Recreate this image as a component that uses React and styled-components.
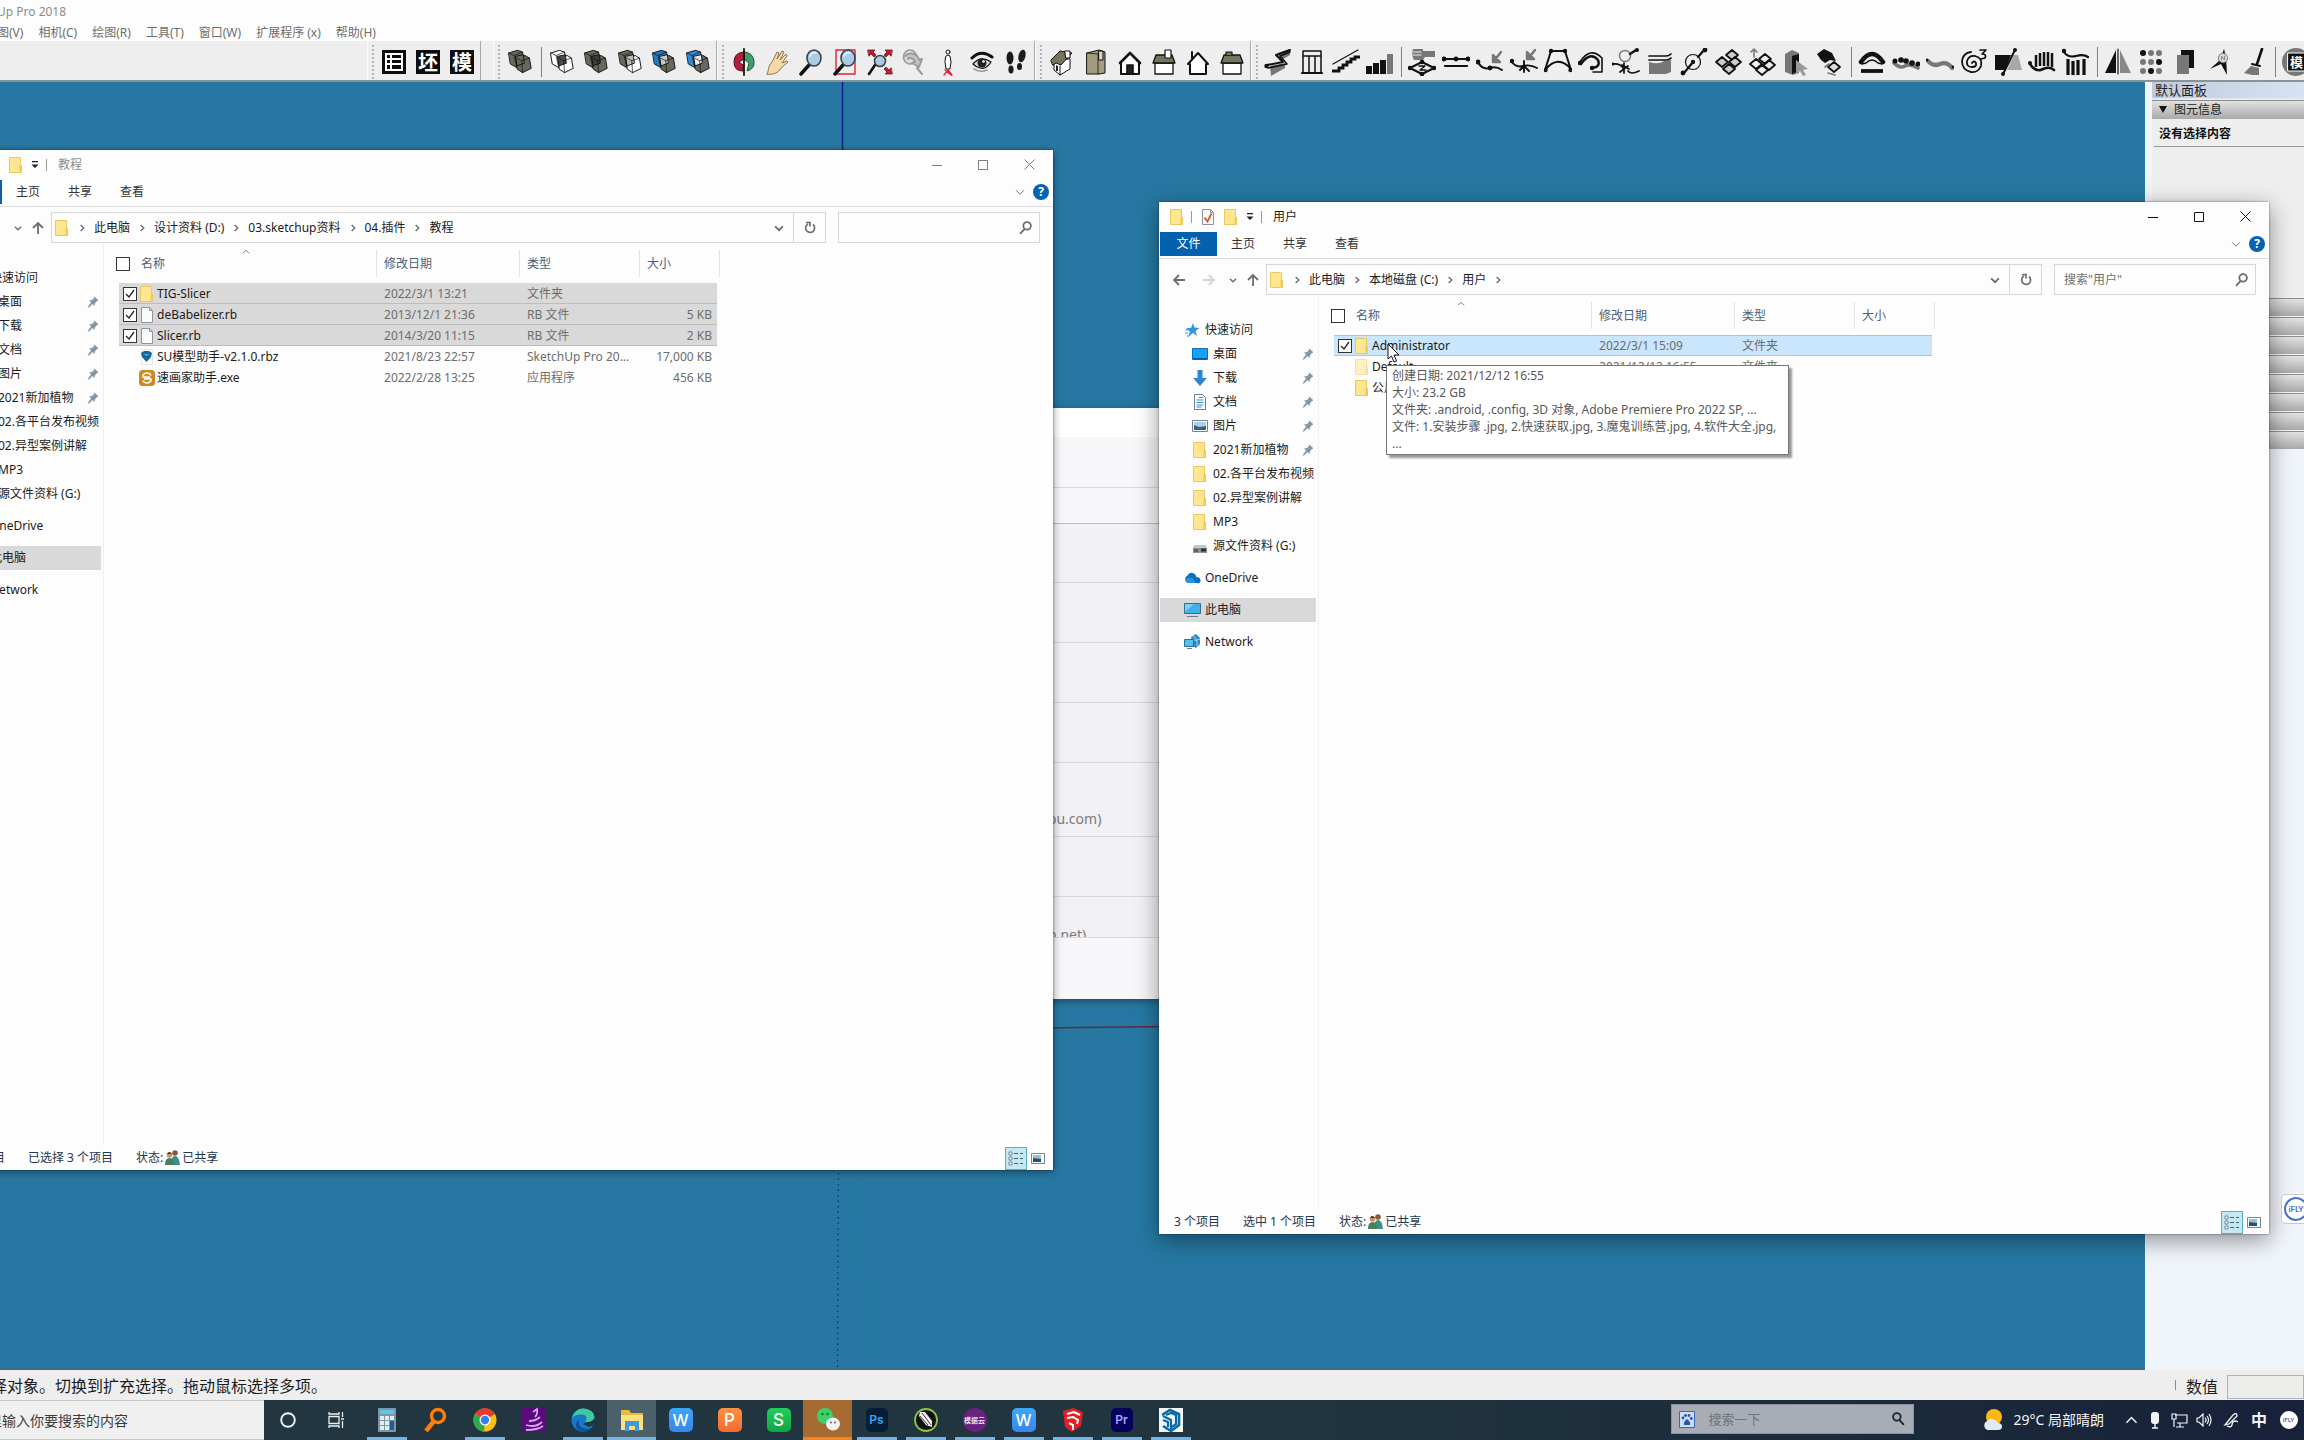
import React from "react";
import styled, { createGlobalStyle, css } from "styled-components";

const Global = createGlobalStyle`
  * { box-sizing: border-box; }
  html, body { margin: 0; padding: 0; overflow: hidden; }
  body, button, input, table {
    font-family: "Noto Sans", "Noto Sans CJK SC", sans-serif;
    font-size: 12px;
    line-height: 16px;
  }
  button { border: 0; padding: 0; margin: 0; background: transparent; color: inherit; white-space: nowrap; }
  ul { list-style: none; margin: 0; padding: 0; }
  svg { display: block; flex: none; }
`;

/* ---------- shell ---------- */
const Desktop = styled.div`
  position: relative;
  display: flex;
  flex-direction: column;
  height: 100vh;
  overflow: hidden;
  background: #fdfdfd;
`;
const TitleText = styled.div`
  height: 24px;
  margin-left: -3px;
  line-height: 24px;
  color: #8c8c8c;
  white-space: nowrap;
`;
const MenuBar = styled.nav`
  display: flex;
  gap: 15px;
  height: 17px;
  margin-left: -15px;
  color: #6e6e6e;
`;
const ToolBar = styled.div`
  display: flex;
  height: 41px;
  padding-left: 367px;
  background: #eeeeee;
  border-bottom: 2px solid #8a9298;
  overflow: hidden;
`;
const ToolGroup = styled.div`
  display: flex;
  flex: none;
  align-items: center;
  padding: 2px 1px 0 4px;
  margin-right: ${(p) => (p.$gap ? "12px" : "0")};
  border-left: 1px solid #fafafa;
  border-right: 1px solid #a9a9a9;
`;
const Grip = styled.span`
  width: 2px;
  height: 34px;
  margin-right: 3px;
  background: repeating-linear-gradient(#b5b5b5 0 2px, transparent 2px 4px);
`;
const ToolSep = styled.span`
  width: 8px;
  height: 30px;
  background: linear-gradient(#7d7d7d, #7d7d7d) center / 1px 100% no-repeat;
`;
const ToolButton = styled.button`
  display: flex;
  align-items: center;
  justify-content: center;
  width: 34px;
  height: 34px;
`;
const CharTile = styled.span`
  width: 24px;
  height: 24px;
  background: #0c0c0c;
  color: #fff;
  font: bold 20px/23px "Noto Sans CJK SC", sans-serif;
  text-align: center;
`;
const Workspace = styled.div`
  display: flex;
  flex: 1;
  min-height: 0;
`;
const Canvas = styled.div`
  position: relative;
  flex: 1;
  background: #2678a2;
  border-bottom: 2px solid #3f6d88;
`;
const AxisLines = styled.svg`
  width: 100%;
  height: 100%;
`;

/* ---------- side panel ---------- */
const Tray = styled.aside`
  display: flex;
  flex-direction: column;
  width: 159px;
  padding-left: 6px;
  background: #f0f4fb;
  border-left: 1px solid #fafafa;
`;
const TrayTitle = styled.h2`
  margin: 0;
  height: 18px;
  padding-left: 3px;
  font-size: 13px;
  font-weight: 400;
  line-height: 16px;
  color: #222;
  background: linear-gradient(90deg, #bfcbdb, #d7e3f2);
  border-bottom: 2px solid #e6eaf0;
`;
const TrayHead = styled.button`
  display: flex;
  align-items: center;
  gap: 7px;
  height: ${(p) => (p.$slim ? "18px" : "19px")};
  margin-bottom: ${(p) => (p.$slim ? "1px" : "0")};
  padding-left: 7px;
  color: #222;
  background: linear-gradient(#e2e2e2, #a9a9a9);
  border-top: 1px solid #8e8e8e;
`;
const TrayBody = styled.div`
  height: 179px;
  padding: 7px 0 0 2px;
  background: #eeeeee;
  font-weight: 700;
  color: #111;
`;
const TrayNote = styled.div`
  padding-left: 5px;
`;
const TrayRule = styled.div`
  height: 1px;
  margin-top: 4px;
  background: #9a9a9a;
`;
const TrayStack = styled.div`
  display: flex;
  flex-direction: column;
  background: #f4f4f4;
`;

/* ---------- app status ---------- */
const AppStatus = styled.footer`
  display: flex;
  align-items: center;
  height: 30px;
  background: #eeeeee;
  font-size: 16px;
  color: #1c1c1c;
`;
const StatusHint = styled.span`
  flex: 1;
  margin-left: -9px;
  padding-top: 2px;
  white-space: nowrap;
`;
const ValueLabel = styled.label`
  display: flex;
  align-items: center;
  gap: 9px;
  padding: 4px 0 0 10px;
`;
const ValueTick = styled.span`
  width: 1px;
  height: 10px;
  background: #8a8a8a;
`;
const ValueInput = styled.input`
  width: 77px;
  height: 24px;
  border: 1px solid #a8b3c0;
  background: #ececea;
`;

/* ---------- taskbar ---------- */
const TaskBar = styled.div`
  display: flex;
  align-items: stretch;
  height: 40px;
  background: linear-gradient(90deg, #21363f, #20353f 55%, #1b2b3b 80%, #18213a);
`;
const TaskSearch = styled.input`
  width: 264px;
  border: 0;
  border-top: 1px solid #c8c8c8;
  border-bottom: 1px solid #c8c8c8;
  padding: 1px 0 0;
  background: #f0f0f0;
  font-size: 14px;
  text-indent: -40px;
  &::placeholder { color: #3c3c3c; opacity: 1; }
`;
const SysButton = styled.button`
  display: flex;
  align-items: center;
  justify-content: center;
  width: 48px;
`;
const AppList = styled.div`
  display: flex;
  flex: 1;
  padding-left: 2px;
`;
const barColor = { open: "#76b3e2", active: "#76b3e2", alert: "#f5821f" };
const TaskButton = styled.button`
  display: flex;
  align-items: center;
  justify-content: center;
  width: 49px;
  background:
    linear-gradient(${(p) => barColor[p.$state] || "transparent"} 0 0) center bottom /
      ${(p) => (p.$state === "open" ? "40px" : "100%")} 3px no-repeat,
    ${(p) => (p.$state === "active" ? "#4a616c" : p.$state === "alert" ? "#a66a33" : "transparent")};
`;
const LogoTile = styled.span`
  display: flex;
  align-items: center;
  justify-content: center;
  width: ${(p) => p.$w || 24}px;
  height: 24px;
  border-radius: ${(p) => (p.$round ? "50%" : "5px")};
  background: ${(p) => p.$bg};
  color: ${(p) => p.$fg || "#fff"};
  font: ${(p) => p.$weight || 500} ${(p) => p.$size || 17}px/24px ${(p) => (p.$cjk ? '"Noto Sans CJK SC"' : "Inter")}, sans-serif;
`;
const DeskSearch = styled.label`
  display: flex;
  align-items: center;
  gap: 14px;
  width: 243px;
  height: 30px;
  margin: 4px 68px 0 0;
  padding: 0 8px 0 7px;
  background: #a8adb5;
  border: 1px solid #8d939c;
`;
const DeskInput = styled.input`
  flex: 1;
  min-width: 0;
  border: 0;
  padding: 0;
  background: transparent;
  font-size: 13px;
  &::placeholder { color: #6d737b; opacity: 1; }
`;
const Weather = styled.button`
  display: flex;
  align-items: center;
  gap: 10px;
  margin-right: 15px;
  font-size: 14px;
  color: #f2f4f7;
`;
const TrayIcons = styled.div`
  display: flex;
  align-items: center;
  color: #f2f4f7;
`;
const TrayButton = styled.button`
  display: flex;
  align-items: center;
  justify-content: center;
  width: ${(p) => p.$w || 24}px;
  height: 40px;
  font-size: 16px;
  font-weight: 700;
`;
const FlyBadge = styled.span`
  display: flex;
  align-items: center;
  justify-content: center;
  width: ${(p) => p.$s}px;
  height: ${(p) => p.$s}px;
  border-radius: 50%;
  border: 2px solid ${(p) => p.$c};
  background: #fff;
  color: #3f6cc0;
  font: bold ${(p) => p.$f}px/12px Lato, sans-serif;
`;
const FloatBall = styled.button`
  position: absolute;
  right: -7px;
  top: 1194px;
  padding: 2px;
  background: #fff;
  border: 1px solid #c5cad6;
  border-radius: 4px;
`;

/* ---------- explorer window ---------- */
const Frame = styled.section`
  position: absolute;
  display: flex;
  flex-direction: column;
  left: ${(p) => p.$x}px;
  top: ${(p) => p.$y}px;
  width: ${(p) => p.$w}px;
  height: ${(p) => p.$h}px;
  background: #fdfdfd;
  color: #1b1b1b;
  box-shadow: ${(p) =>
    p.$active ? "0 6px 22px rgba(0,0,0,.42), 0 0 2px rgba(0,0,0,.5)" : "0 2px 9px rgba(0,0,0,.4), 0 0 2px rgba(0,0,0,.5)"};
`;
const TitleBar = styled.header`
  display: flex;
  align-items: center;
  height: 29px;
  padding: 0 1px 0 10px;
  color: ${(p) => (p.$active ? "#1b1b1b" : "#8e8e8e")};
`;
const QuickTools = styled.div`
  display: flex;
  align-items: center;
  flex: 1;
`;
const QuickButton = styled.button`
  display: flex;
  justify-content: center;
  width: ${(p) => p.$w}px;
`;
const TitleRule = styled.span`
  width: 1px;
  height: 12px;
  margin: 0 ${(p) => p.$side || 0}px;
  background: #9a9a9a;
`;
const WindowName = styled.span`
  padding-left: 7px;
`;
const FrameButton = styled.button`
  display: flex;
  align-items: center;
  justify-content: center;
  width: 46px;
  height: 28px;
  color: ${(p) => (p.$active ? "#111" : "#7c7c7c")};
`;
const TabRow = styled.div`
  display: flex;
  align-items: center;
  height: 28px;
  padding: 1px 4px 2px 1px;
  border-bottom: 1px solid #dcdcdc;
`;
const Tab = styled.button`
  width: 52px;
  height: 24px;
  color: #333;
  ${(p) => p.$file && css`
    width: 57px;
    color: #fff;
    background: #0461ae;
  `}
`;
const RibbonEnd = styled.div`
  display: flex;
  flex: 1;
  align-items: center;
  justify-content: flex-end;
  gap: 8px;
`;
const Help = styled.button`
  width: 16px;
  height: 16px;
  border-radius: 50%;
  background: #0862b0;
  color: #fff;
  font-size: 12px;
  font-weight: 700;
  line-height: 16px;
`;
const AddressRow = styled.div`
  display: flex;
  height: 36px;
  padding: 5px 13px 0 5px;
  color: #6e6e6e;
`;
const NavButton = styled.button`
  display: flex;
  align-items: center;
  justify-content: center;
  width: ${(p) => p.$w}px;
  color: ${(p) => (p.$dim ? "#d4d4d4" : "#6e6e6e")};
`;
const AddressBox = styled.div`
  display: flex;
  align-items: center;
  flex: 1;
  margin: 0 12px 0 1px;
  padding-left: 2px;
  border: 1px solid #d6d6d6;
`;
const Crumb = styled.button`
  color: #1b1b1b;
`;
const CrumbArrow = styled.span`
  display: flex;
  justify-content: center;
  width: 24px;
`;
const Grow = styled.span`
  flex: 1;
`;
const Refresh = styled.button`
  display: flex;
  align-items: center;
  justify-content: center;
  width: 32px;
  height: 100%;
  border-left: 1px solid #d6d6d6;
`;
const SearchBox = styled.label`
  display: flex;
  align-items: center;
  width: 202px;
  padding: 0 7px 0 9px;
  border: 1px solid #d6d6d6;
`;
const SearchInput = styled.input`
  flex: 1;
  min-width: 0;
  padding: 0;
  border: 0;
  background: transparent;
  &::placeholder { color: #707070; opacity: 1; }
`;
const Body = styled.div`
  display: flex;
  flex: 1;
  min-height: 0;
`;
const Side = styled.ul`
  width: 160px;
  padding: 23px 2px 0 1px;
  border-right: 1px solid #f1f1f1;
`;
const SideItem = styled.li`
  display: flex;
  align-items: center;
  gap: ${(p) => (p.$top ? "4px" : "5px")};
  height: 24px;
  margin-top: ${(p) => (p.$apart ? "8px" : "0")};
  padding-left: ${(p) => (p.$top ? "24px" : "32px")};
  padding-right: 2px;
  background: ${(p) => (p.$on ? "#d9d9d9" : "transparent")};
  white-space: nowrap;
`;
const SideLink = styled.a`
  flex: 1;
  color: #1b1b1b;
  text-decoration: none;
`;
const Listing = styled.div`
  flex: 1;
  padding: 7px 0 0 12px;
`;
const Files = styled.table`
  table-layout: fixed;
  width: 604px;
  border-collapse: collapse;
  td, th { padding: 0; font-weight: 400; text-align: left; }
`;
const HeadCell = styled.div`
  position: relative;
  display: flex;
  align-items: center;
  gap: 11px;
  height: 27px;
  margin-bottom: 6px;
  padding-left: ${(p) => (p.$first ? "0" : "7px")};
  color: #4c607a;
  border-right: 1px solid #e2e2e2;
`;
const SortMark = styled.span`
  position: absolute;
  top: -2px;
  left: 126px;
`;
const Tick = styled.input`
  appearance: none;
  flex: none;
  width: 14px;
  height: 14px;
  margin: 0;
  border: 1px solid #333;
  background: #fff;
  visibility: ${(p) => (p.$hide ? "hidden" : "visible")};
  &:checked {
    background: #fff url("data:image/svg+xml,%3Csvg xmlns='http://www.w3.org/2000/svg' viewBox='0 0 12 12'%3E%3Cpath d='M2 6l3 3 5-7' fill='none' stroke='%23222' stroke-width='1.3'/%3E%3C/svg%3E");
  }
`;
const FileRow = styled.tr`
  height: 21px;
  color: #6d6d6d;
`;
const FileCell = styled.td`
  padding-left: 7px !important;
  overflow: hidden;
  white-space: nowrap;
  text-overflow: ellipsis;
  ${(p) => p.$name && css`padding-left: 4px !important; color: #1b1b1b;`}
  ${(p) => p.$size && css`padding-right: 5px !important; text-align: right !important; overflow: visible; direction: rtl;`}
  ${(p) => p.$mark === "grey" && css`background: #d9d9d9; box-shadow: inset 0 -1px #bcbcbc;`}
  ${(p) => p.$mark === "blue" && css`background: #cae6fd; box-shadow: inset 0 1px #9ccbee, inset 0 -1px #9ccbee;`}
`;
const SizeText = styled.span`
  direction: ltr;
  unicode-bidi: embed;
`;
const NameInner = styled.div`
  display: flex;
  align-items: center;
  gap: 2px;
  height: 21px;
`;
const FrameStatus = styled.footer`
  display: flex;
  align-items: center;
  gap: 23px;
  height: 24px;
  padding: 0 8px 0 15px;
  color: #24364c;
`;
const Shared = styled.span`
  display: flex;
  flex: 1;
  align-items: center;
  gap: 1px;
`;
const Views = styled.div`
  display: flex;
  align-items: center;
  gap: 3px;
`;
const ViewButton = styled.button`
  display: flex;
  align-items: center;
  justify-content: center;
  width: ${(p) => (p.$on ? "22px" : "15px")};
  height: 23px;
  background: ${(p) => (p.$on ? "#c5e8f2" : "transparent")};
  border: ${(p) => (p.$on ? "1px solid #59adc4" : "0")};
`;

/* ---------- tooltip, pointer, dialog behind ---------- */
const Tip = styled.div`
  position: absolute;
  left: 1386px;
  top: 365px;
  padding: 1px 12px 2px 5px;
  border: 1px solid #767676;
  background: #fff;
  box-shadow: 3px 3px 2px rgba(0, 0, 0, 0.4);
  color: #575757;
  line-height: 17px;
  white-space: nowrap;
`;
const Pointer = styled.svg`
  position: absolute;
  left: 1387px;
  top: 343px;
`;
const Dialog = styled.section`
  position: absolute;
  display: flex;
  flex-direction: column;
  left: 900px;
  top: 408px;
  width: 400px;
  height: 591px;
  background: #f7f7fa;
  box-shadow: 0 2px 8px rgba(0, 0, 0, 0.4);
  color: #7a7a7a;
  font-size: 14px;
`;
const DialogRow = styled.div`
  display: flex;
  align-items: flex-end;
  flex: none;
  height: ${(p) => p.$h}px;
  padding: 0 0 ${(p) => p.$pad || 0}px 148px;
  background: ${(p) => p.$bg || "#f2f1f6"};
  border-bottom: 1px solid ${(p) => p.$line || "#d8d8dc"};
  overflow: hidden;
`;
const DialogText = styled.span`
  flex: none;
  margin-bottom: ${(p) => (p.$cut ? "-6px" : "0")};
`;

/* ---------- drawings ---------- */
const Tool = ({ children, w = 28, h = 28 }) => (
  <svg width={w} height={h} viewBox="0 0 28 28" fill="none" stroke="#111" strokeWidth="1.6" strokeLinecap="round" strokeLinejoin="round">{children}</svg>
);
const G = "#777";
const solid = (a, b, c) => (
  <Tool w={24} h={25}>
    <g strokeWidth="1.1">
      <path d="M1 4l10-3 6 2 2 14-9 4-7-4z" fill={a} />
      <path d="M10 10l10-3 5 3 2 12-10 5-6-4z" fill={b} />
      <path d="M9 8l9-2 1 10-8 3z" fill={c} />
      <path d="M1 4l6 3 10-4M7 7l3 13M10 10l6 3 9-3M16 13l1 14" strokeWidth=".8" />
    </g>
  </Tool>
);
const brown = "#69685c";
const diamond = (x, y, f) => <path key={x + "-" + y} d={`M${x} ${y - 5}l6 5-6 5-6-5z`} fill={f} strokeWidth="1.8" />;
const dot = (x, y, r = 2, f = "#111") => <circle key={x + "," + y} cx={x} cy={y} r={r} fill={f} stroke="none" />;
const lens = (
  <g><path d="M11 17L3 26" strokeWidth="3.4" /><ellipse cx="16" cy="10" rx="7" ry="8" fill="#a9cbe6" stroke="#39424c" strokeWidth="1.6" /><path d="M12 8q2-4 6-3" stroke="#e8f3fb" /></g>
);
const roofA = "#77745e";

const toolGroups = [
  { gap: true, items: ["frame", "坯", "模"] },
  { items: [
    solid(brown, brown, brown), "|",
    solid("#fff", "#fff", "#4d4c44"), solid(brown, brown, "#3c3b35"), solid(brown, "#fff", "#b9b9b6"),
    solid("#1f78c8", brown, "#c9c9c4"), solid("#2f8bdc", brown, "#eee"),
  ] },
  { items: [
    <Tool><path d="M13 4q-9 1-9 10t9 9v-6l-4-3 5-3z" fill="#b3203c" stroke="#5d1120" strokeWidth="1" /><path d="M15 4q8 1 9 9t-7 10l2-8-5-4z" fill="#3f9d6b" stroke="#215a3b" strokeWidth="1" /><path d="M14 1v26" strokeWidth="1.8" /></Tool>,
    <Tool><path d="M3 26c2-4 1-8 5-12l5-10 2 1-2 6 5-8 2 1-4 8 6-6 1 2-5 7 5-2 1 1-7 6c-2 4-5 5-8 6z" fill="#f5d9a8" stroke="#8b744d" strokeWidth="1" /></Tool>,
    <Tool>{lens}</Tool>,
    <Tool><path d="M4 2h19v24H4z" stroke="#dc2438" strokeWidth="1.4" />{lens}</Tool>,
    <Tool><path d="M9 17l-6 9" strokeWidth="2.6" /><circle cx="14" cy="13" r="5.500" fill="#a9cbe6" stroke="#39424c" /><g fill="#b4202e" stroke="#7c1520" strokeWidth=".8"><path d="M2 2h7l-2 2 3 3-2 2-3-3-2 2z" /><path d="M26 2h-7l2 2-3 3 2 2 3-3 2 2z" /><path d="M26 26h-7l2-2-3-3 2-2 3 3 2-2z" /></g></Tool>,
    <Tool><ellipse cx="10" cy="9" rx="6.500" ry="7" fill="#dcdcdc" stroke="#9a9a9a" /><path d="M5 8c5-5 13-2 14 4l3-1-3 8-7-4 3-1c-1-4-5-5-7-3M17 20l5 6" stroke="#9a9a9a" fill="#c4c4c4" strokeWidth="2" /></Tool>,
    <Tool><circle cx="14" cy="4" r="2" strokeWidth="1" fill="#fff" /><path d="M12 8q2-2 4 0l1 6-1 7h-4l-1-7z" strokeWidth="1" fill="#fff" /><path d="M10 27l4-5 4 5M11 22l6 5" stroke="#dc2438" strokeWidth="1.300" /></Tool>,
    <Tool><path d="M4 10q9-9 20-1" strokeWidth="3" /><path d="M5 16q8-9 18-2-5 8-11 6-4-1-7-4z" fill="#ddd" strokeWidth="1.200" /><circle cx="14" cy="15" r="4.500" fill="#222" stroke="none" /><circle cx="15.500" cy="13.500" r="1.300" fill="#fff" stroke="none" /><path d="M6 21q7 4 13 1" stroke="#999" /></Tool>,
    <Tool><g fill="#1b1b1b" stroke="none"><ellipse cx="8" cy="10" rx="3.500" ry="6.500" /><ellipse cx="9" cy="21.500" rx="2.600" ry="4" /><ellipse cx="20" cy="8" rx="3.500" ry="6.500" transform="rotate(14 20 8)" /><ellipse cx="17.500" cy="18.500" rx="2.500" ry="3.600" /></g></Tool>,
  ] },
  { items: [
    <Tool><path d="M6 14v8l6 5 10-6V11z" fill="#fff" strokeWidth="1" /><path d="M12 27v-9" strokeWidth="1" /><path d="M3 12l9-9 12 2-11 12-5-2-3 2z" fill={roofA} strokeWidth="1" /><path d="M17 3h5v7h-4z" fill="#fff" strokeWidth="1" /><path d="M8 17v6h2v-5z" fill="#222" stroke="none" /></Tool>,
    <Tool><path d="M5 5l12-3 6 2v21l-6 1H5z" fill="#a39d80" strokeWidth="1" /><path d="M16 6v20M16 6L5 5" strokeWidth=".8" /><path d="M17 3h4v9h-4z" fill="#d8d5c6" strokeWidth="1" /></Tool>,
    <Tool><path d="M5 15v11h18V15" fill="#fff" strokeWidth="2" /><path d="M4 15L14 5l10 10" strokeWidth="2.600" fill="#fff" /><path d="M11 26v-9h6v9z" fill="#222" /></Tool>,
    <Tool><path d="M5 15h18v11H5z" fill="#fff" strokeWidth="1.300" /><path d="M3 15l3-8h16l3 8z" fill={roofA} strokeWidth="1.300" /><path d="M15 2h6v8h-6z" fill="#fff" strokeWidth="1.200" /></Tool>,
    <Tool><path d="M8 10V4" strokeWidth="2" /><path d="M4 16L14 5l10 11h-2v10H6V16z" fill="#fff" strokeWidth="2" /></Tool>,
    <Tool><path d="M5 15h18v11H5z" fill="#fff" strokeWidth="1.300" /><path d="M3 15l3-8h16l3 8z" fill={roofA} strokeWidth="1.300" /><path d="M8 7V4h6v3" fill={roofA} strokeWidth="1.200" /></Tool>,
  ] },
  { items: [
    <Tool><path d="M6 18l15-3v5L7 28zM14 5l12-4v6l-10 6z" fill={G} stroke="none" /><path d="M3 17l16-3-7-7 14-5" strokeWidth="2" /><path d="M4 20l19-4-7-8 10-4" strokeWidth="1.600" />{dot(2.500, 18, 2.200)}</Tool>,
    <Tool><path d="M5 3h18v22H5zM5 8h18M11 8v17M17 8v17" strokeWidth="1.500" strokeLinecap="butt" /><path d="M4 25h20" strokeWidth="2" /></Tool>,
    <Tool><path d="M1 16L26 2" strokeWidth="1.200" /><path d="M0 23h7v-3h4v-3h4v-3h4v-3h4V9h5" strokeWidth="2.800" strokeLinejoin="miter" strokeLinecap="butt" /></Tool>,
    <Tool><g stroke="none" fill="#111"><path d="M0 18h6v8H0zM7 15h6v11H7zM14 12h6v14h-6z" /><path d="M21 6h6v20h-6z" fill={G} /></g></Tool>, "|",
    <Tool><path d="M5 1h10v2h12v6H17l-2 3H6q-3-5-1-11z" fill={G} stroke="none" /><path d="M5 4h8M5 7h8" stroke="#eee" strokeWidth="1" /><path d="M2 20l12-6 12 6-12 6z" strokeWidth="2" />{[[2, 20], [26, 20], [14, 14], [14, 26]].map(([x, y]) => dot(x, y, 2.300))}<path d="M11 18h6l-5 4h6" strokeWidth="1.300" /></Tool>,
    <Tool><path d="M1 11h26M3 18h22" strokeWidth="2.200" />{dot(2, 11, 2.400)}{dot(14, 11, 2.400)}{dot(26, 11, 2.400)}</Tool>,
    <Tool><path d="M25 4l-7 9M17 7v7h7z" stroke={G} fill={G} strokeWidth="2.400" /><path d="M2 14q4 8 12 6 6-2 12 2" strokeWidth="2" />{dot(2, 14, 2.400)}{dot(14, 20, 2.400)}</Tool>,
    <Tool><path d="M25 2l-7 9M17 4v7h7z" stroke={G} fill={G} strokeWidth="2.400" /><path d="M1 13q5 7 12 5 7-2 14 2M14 13v11M10 22l4-4 5 5" strokeWidth="1.900" />{dot(2, 13, 2.200)}</Tool>,
    <Tool><path d="M7 3h14l6 19M7 3L1 22Q14 6 27 21" strokeWidth="2" />{[[7, 3], [21, 3], [1.500, 22], [26.500, 22]].map(([x, y]) => dot(x, y, 2.200))}</Tool>,
    <Tool><path d="M2 14Q12-2 24 10v14h-9" strokeWidth="1.600" /><path d="M3 16Q12 3 20 12q3 7-6 8" strokeWidth="2.400" />{dot(2, 15, 2.200)}{dot(14, 20, 2.200)}</Tool>,
    <Tool><circle cx="13" cy="8" r="5.500" stroke={G} strokeWidth="1.400" /><path d="M18 6l6-4" strokeWidth="2.400" /><path d="M1 16q7-1 10 4M16 23q3 4 11 0M12 15v10M8 24l8-6M10 17l7 4" strokeWidth="1.700" />{dot(25, 2, 2)}{dot(1, 16, 1.600)}</Tool>,
    <Tool><path d="M3 14q10 3 15-1l7-1v12l-5 2H3z" fill={G} stroke="none" /><path d="M3 8h17q3 0 5-2M3 12h17q3 0 5-2" strokeWidth="1.700" /></Tool>,
    <Tool><circle cx="13" cy="14" r="7.500" strokeWidth="1.200" /><path d="M4 25L13 14M18 9l7-8" strokeWidth="2.200" />{dot(3, 25, 2.400)}{dot(13, 14, 2.200)}{dot(25, 2, 2.400)}</Tool>,
    <Tool>{diamond(18, 7, "#ccc")}{diamond(8, 14, "#ccc")}{diamond(21, 14, "#ccc")}{diamond(15, 21, "#ccc")}</Tool>,
    <Tool>{diamond(17, 11, "none")}{diamond(8, 16, "none")}{diamond(21, 17, "none")}{diamond(14, 22, "none")}<path d="M6 9V2M3 4l3-3 3 3" stroke={G} /></Tool>,
    <Tool><path d="M3 6l7-4 7 3v20l-6 2-8-3z" fill={G} stroke="none" /><path d="M10 8l7-2v17l-7 3z" fill="#111" stroke="none" /><path d="M14 12l12 9-5 1 3 5-3 1-3-5-4 3z" fill="#999" stroke="none" /></Tool>,
    <Tool><path d="M1 6l7-5 8 4 4 8-6-1-5 3-4-3z" fill="#111" stroke="none" />{diamond(18, 19, "#ddd")}<path d="M9 19l4-3M12 25l7 2" stroke={G} /></Tool>, "|",
    <Tool><path d="M3 14Q14-2 25 14" strokeWidth="4.500" /><path d="M4 16l4-1q6-6 12 0l4 1" strokeWidth="1.400" /><path d="M3 23h22" strokeWidth="3.800" strokeLinecap="butt" /></Tool>,
    <Tool><path d="M2 15q6 6 11 3t13 2" stroke={G} strokeWidth="3.600" />{dot(3, 13, 2.500)}{dot(9, 12, 2.800)}{dot(14, 13, 2.800)}{dot(20, 15, 2.800)}{dot(26, 16, 2.500)}</Tool>,
    <Tool><path d="M2 13q5 6 12 3t12 4" stroke={G} strokeWidth="4.200" />{dot(1, 12, 1.400)}{dot(27, 19, 1.400)}</Tool>,
    <Tool><path d="M12 15q2-3 4 0 1 4-4 4-6 0-5-6 2-6 8-5 8 2 6 10-3 7-10 6-9-2-9-11 1-8 9-9" strokeWidth="1.800" /><path d="M20 2h6l-4 4q5 0 3 4l-4 1" strokeWidth="1.700" /></Tool>,
    <Tool><path d="M1 7h16l-6 15H1z" fill="#111" stroke="none" /><path d="M20 7h4l4 15H13z" fill="#a8a8a8" stroke="none" /><path d="M9 26L21 2" strokeWidth="2" />{dot(9, 26, 2)}{dot(21, 2, 2)}</Tool>,
    <Tool><path d="M2 16q6 9 13 5 7-3 11 1" strokeWidth="2.600" /><path d="M8 7v12M12 5v13M16 4v14M20 4v14M24 5v14" strokeWidth="2.500" strokeLinecap="butt" />{dot(2, 15, 2)}</Tool>,
    <Tool><path d="M2 4q4 6 12 4 8-2 12 1" strokeWidth="2.200" /><path d="M6 11v16M11 13v14M16 12v15M22 11v16" strokeWidth="3.200" strokeLinecap="butt" />{dot(2, 3, 2.200)}</Tool>, "|",
    <Tool><path d="M12 2v23H1z" fill="#111" stroke="none" /><path d="M16 2v23h11z" fill="#888" stroke="none" /><path d="M14 1v25" strokeWidth="1.200" /></Tool>,
    <Tool>{[5, 14, 23].map((y, r) => [5, 13, 21].map((x, c) => dot(x, y, 3, (r === 0 && c === 0) || (r === 1 && c === 2) || (r === 2 && c === 1) ? "#111" : G)))}</Tool>,
    <Tool><path d="M9 2h13v18H9z" fill="#111" stroke="none" /><path d="M5 7h12v19H5z" fill={G} stroke="none" /></Tool>,
    <Tool><path d="M18 1l2 8 1 18-6-11-11 5 10-9z" fill="#111" stroke="none" /><circle cx="17" cy="10" r="4.500" fill="#ddd" stroke="#888" strokeWidth="1.200" /><path d="M15.500 12V8l3 4V8" stroke="#888" strokeWidth="1" /></Tool>,
    <Tool><path d="M22 1l-5 15" strokeWidth="2.600" /><path d="M12 16l8 2" strokeWidth="2" /><path d="M11 18l8 2v7l-7 0-8-2z" fill={G} stroke="none" /></Tool>, "|",
    <Tool><circle cx="14" cy="14" r="14" fill="#777" stroke="none" /><path d="M6 5h17v18H6z" fill="#111" stroke="#fff" strokeWidth="1" /><text x="14.500" y="19" textAnchor="middle" fontSize="13" fontWeight="700" fontFamily="Noto Sans CJK SC" fill="#fff" stroke="none">模</text></Tool>,
  ] },
];

const Folder = ({ pale }) => (
  <svg width="16" height="16" viewBox="0 0 16 16" opacity={pale ? 0.55 : 1}>
    <path d="M1.500.5h11v8h1v7h-12z" fill="#ffe68f" stroke="#e8c860" /><path d="M11.500 8v7.500h2V8z" fill="#f0cb55" />
  </svg>
);
const PageIcon = ({ check }) => (
  <svg width="16" height="16" viewBox="0 0 16 16">
    <path d="M2.500.5h8l3 3v12h-11z" fill="#fafbfc" stroke="#8d949b" /><path d="M10.500.5v3h3" fill="none" stroke="#8d949b" />
    {check && <path d="M4.500 8.500l3 4 4-8" fill="none" stroke="#d9582c" strokeWidth="1.800" />}
  </svg>
);
const Gem = () => (
  <svg width="16" height="16" viewBox="0 0 16 16"><path d="M2.500.5h11v15h-11z" fill="#fff" stroke="#e3e6ea" /><path d="M2 4l3-2h5l3 2-1 4-4.500 5L3 8z" fill="#14669b" /><path d="M4 5h7l-3.500 2z" fill="#4fa6d4" /></svg>
);
const Exe = () => (
  <svg width="16" height="16" viewBox="0 0 16 16"><rect width="16" height="16" rx="3.500" fill="#cc8b22" /><path d="M12 5.500Q11 3 8 3T4 5.500 8 8t4 2.500T8 13t-4-2.500M5 7h6M5 9h6" fill="none" stroke="#fff8e8" strokeWidth="1.700" /></svg>
);
const SideIcons = {
  star: <svg width="17" height="16" viewBox="0 0 17 16"><path d="M9 1l1.500 4.500 5 .5-4 3 1.500 5L9 11l-5 4 2-5.500L2 6h5z" fill="#2f98e0" /><path d="M1 8h4M1 11h3M3 14h2" stroke="#2f98e0" /></svg>,
  desk: <svg width="16" height="16" viewBox="0 0 16 16"><path d="M.5 2.500h15v11H.5z" fill="#18a0f4" stroke="#0d6fb8" /><path d="M1 12h14v1.500H1z" fill="#0b5a9a" /></svg>,
  down: <svg width="16" height="16" viewBox="0 0 16 16"><path d="M5.500 0h5v8H15l-7 8-7-8h4.500z" fill="#2c86d3" /></svg>,
  doc: <svg width="16" height="16" viewBox="0 0 16 16"><path d="M2.500.5h8l3 3v12h-11z" fill="#fff" stroke="#6b7f92" /><path d="M7 3.500h4M4.500 6h7M4.500 8.500h7M4.500 11h7M4.500 13h5" stroke="#3a8ec4" /></svg>,
  pic: <svg width="16" height="16" viewBox="0 0 16 16"><path d="M.5 2.500h15v11H.5z" fill="#fff" stroke="#77838f" /><path d="M2 4h12v8H2z" fill="#a6d3ee" /><path d="M2 7l5 2 7-1v4H2z" fill="#39637c" /></svg>,
  folder: <Folder />,
  drive: <svg width="16" height="16" viewBox="0 0 16 16"><path d="M1 10h14v5H1z" fill="#8a9490" /><path d="M2 7h12l1 3H1z" fill="#c2c8c5" /><path d="M3 11v3M5 11v3" stroke="#333" /><path d="M9 10.500h5v3H9z" fill="#2d3331" /></svg>,
  cloud: <svg width="17" height="16" viewBox="0 0 17 16"><path d="M4 13a4 4 0 0 1-.5-7.500Q5 2 9 3q3 1 3.500 4 4 0 4 3.500T13 13z" fill="#0f6fc0" /><path d="M3 8q5-2 9 5H4q-4-1-1-5z" fill="#2a93dc" /></svg>,
  pc: <svg width="17" height="16" viewBox="0 0 17 16"><path d="M.5 1.500h16v10H.5z" fill="#3fb0ea" stroke="#3a6a8c" /><path d="M1 2h9L1 10z" fill="#7fd0f7" /><path d="M3 14.500h11" stroke="#5f7f93" /></svg>,
  net: <svg width="17" height="16" viewBox="0 0 17 16"><path d="M7 3l5-3 4 4v6l-4 4-4-2z" fill="#3488bd" /><path d="M9 2q5 3 4 10M8 6q5 1 8-1" stroke="#9bd6f3" fill="none" /><path d="M.5 5.500h9v7h-9z" fill="#56c0ee" stroke="#2b6d94" /><path d="M3 14.500h5" stroke="#5f7f93" /></svg>,
};
const Pin = () => (
  <svg width="12" height="12" viewBox="0 0 12 12"><path d="M7.500.5l4 4-1.500.5-2 2.500-.5 2.500-2-2L2 11.500.5 11.500 4 6.500l-2-2 3-.5L7 2z" fill="#8796a3" /></svg>
);
const Chevron = ({ s = 8, w = 1.6, dir = "M1 3l3.500 3.500L8 3" }) => (
  <svg width={s} height={s} viewBox="0 0 9 9" fill="none" stroke="currentColor" strokeWidth={w}><path d={dir} /></svg>
);
const Magnifier = ({ c = "currentColor", flip }) => (
  <svg width="13" height="14" viewBox="0 0 12 13" fill="none" stroke={c} strokeWidth="1.700" transform={flip ? "scale(-1 1)" : undefined}><circle cx="7.500" cy="4.500" r="3.500" /><path d="M5 7.500L1 12" /></svg>
);
const Arrow = ({ d }) => (
  <svg width="14" height="14" viewBox="0 0 14 14" fill="none" stroke="currentColor" strokeWidth="1.800"><path d={d} /></svg>
);
const People = () => (
  <svg width="17" height="16" viewBox="0 0 17 16"><circle cx="11" cy="3" r="2.800" fill="#8a5a36" /><path d="M7 15q0-9 4-9t5 9z" fill="#3d8e8c" /><circle cx="5.500" cy="5" r="2.800" fill="#c6966a" /><path d="M1 15q0-7 4.500-7T10 15z" fill="#4e7d5b" /><path d="M3 4q2-4 5 0" fill="#4d3320" /></svg>
);

const sideItems = [
  ["star", "快速访问", "top"], ["desk", "桌面", "pin"], ["down", "下载", "pin"], ["doc", "文档", "pin"], ["pic", "图片", "pin"],
  ["folder", "2021新加植物", "pin"], ["folder", "02.各平台发布视频"], ["folder", "02.异型案例讲解"], ["folder", "MP3"], ["drive", "源文件资料 (G:)"],
  ["cloud", "OneDrive", "top", true], ["pc", "此电脑", "top", true, true], ["net", "Network", "top", true],
];

function Explorer({ box, active, name, crumbs, trail, hint, rows, mark, counts }) {
  return (
    <Frame $x={box[0]} $y={box[1]} $w={box[2]} $h={box[3]} $active={active}>
      <TitleBar $active={active}>
        <QuickTools>
          <Folder />
          <TitleRule $side={6} />
          <QuickButton $w={20} aria-label="属性"><PageIcon check /></QuickButton>
          <QuickButton $w={25} aria-label="新建文件夹"><Folder /></QuickButton>
          <QuickButton $w={14} aria-label="自定义">
            <svg width="8" height="8" viewBox="0 0 8 8"><path d="M1 0h6v1.300H1zM.5 3.500h7L4 7z" fill="#222" /></svg>
          </QuickButton>
          <TitleRule $side={4} />
          <WindowName>{name}</WindowName>
        </QuickTools>
        <FrameButton $active={active} aria-label="最小化"><svg width="10" height="10" viewBox="0 0 10 10"><path d="M0 5.500h10" stroke="currentColor" /></svg></FrameButton>
        <FrameButton $active={active} aria-label="最大化"><svg width="10" height="10" viewBox="0 0 10 10"><path d="M.5.5h9v9h-9z" fill="none" stroke="currentColor" /></svg></FrameButton>
        <FrameButton $active={active} aria-label="关闭"><svg width="11" height="11" viewBox="0 0 11 11"><path d="M.5.5l10 10M10.500.5l-10 10" stroke="currentColor" /></svg></FrameButton>
      </TitleBar>
      <TabRow>
        <Tab $file>文件</Tab><Tab>主页</Tab><Tab>共享</Tab><Tab>查看</Tab>
        <RibbonEnd><NavButton $w={10} aria-label="展开功能区"><Chevron s={10} w={0.9} /></NavButton><Help>?</Help></RibbonEnd>
      </TabRow>
      <AddressRow>
        <NavButton $w={30} aria-label="后退"><Arrow d="M13 7H2M7 2L2 7l5 5" /></NavButton>
        <NavButton $w={30} $dim aria-label="前进"><Arrow d="M1 7h11M7 2l5 5-5 5" /></NavButton>
        <NavButton $w={17} aria-label="最近位置"><Chevron s={8} w={1.500} /></NavButton>
        <NavButton $w={24} aria-label="上移"><Arrow d="M7 13V2M2 7l5-5 5 5" /></NavButton>
        <AddressBox>
          <Folder />
          {crumbs.map((c, i) => (
            <React.Fragment key={c}>
              <CrumbArrow><Chevron s={8} dir="M3 1l3.500 3.500L3 8" /></CrumbArrow>
              <Crumb>{c}</Crumb>
              {trail && i === crumbs.length - 1 && <CrumbArrow><Chevron s={8} dir="M3 1l3.500 3.500L3 8" /></CrumbArrow>}
            </React.Fragment>
          ))}
          <Grow />
          <NavButton $w={28} aria-label="历史"><Chevron s={10} w={1.700} /></NavButton>
          <Refresh aria-label="刷新"><svg width="12" height="13" viewBox="0 0 12 13" fill="none" stroke="currentColor" strokeWidth="1.700"><path d="M9 3.500A4.500 4.500 0 1 1 4 3M2 1.500h4v4" /></svg></Refresh>
        </AddressBox>
        <SearchBox><SearchInput type="text" placeholder={hint} aria-label="搜索" /><Magnifier /></SearchBox>
      </AddressRow>
      <Body>
        <Side>
          {sideItems.map(([icon, label, kind, apart, on]) => (
            <SideItem key={label} $top={kind === "top"} $apart={apart} $on={on}>
              {SideIcons[icon]}<SideLink href="#">{label}</SideLink>{kind === "pin" && <Pin />}
            </SideItem>
          ))}
        </Side>
        <Listing>
          <Files>
            <colgroup><col width="3" /><col width="258" /><col width="143" /><col width="120" /><col width="77" /><col width="3" /></colgroup>
            <thead>
              <tr>
                <th colSpan="2"><HeadCell $first><Tick type="checkbox" aria-label="全选" />名称<SortMark><Chevron s={8} w={0.9} dir="M1 6l3.500-3.500L8 6" /></SortMark></HeadCell></th>
                <th><HeadCell>修改日期</HeadCell></th><th><HeadCell>类型</HeadCell></th><th colSpan="2"><HeadCell>大小</HeadCell></th>
              </tr>
            </thead>
            <tbody>
              {rows.map(([icon, file, date, type, size, sel]) => (
                <FileRow key={file}>
                  <td />
                  <FileCell $name $mark={sel && mark}><NameInner><Tick type="checkbox" aria-label={file} checked={!!sel} readOnly $hide={!sel} />{icon}{file}</NameInner></FileCell>
                  <FileCell $mark={sel && mark}>{date}</FileCell>
                  <FileCell $mark={sel && mark}>{type}</FileCell>
                  <FileCell $size $mark={sel && mark}><SizeText>{size}</SizeText></FileCell>
                  <td />
                </FileRow>
              ))}
            </tbody>
          </Files>
        </Listing>
      </Body>
      <FrameStatus>
        {counts.map((c) => <span key={c}>{c}</span>)}
        <Shared>状态:<People />已共享</Shared>
        <Views>
          <ViewButton $on aria-label="详细信息"><svg width="16" height="15" viewBox="0 0 16 15"><path d="M1 1h3v3H1zM1 6h3v3H1zM1 11h3v3H1z" fill="#fff" stroke="#6a8a96" /><path d="M6 2.500h4M12 2.500h3M6 7.500h4M12 7.500h3M6 12.500h4M12 12.500h3" stroke="#47616c" /></svg></ViewButton>
          <ViewButton aria-label="大图标"><svg width="14" height="11" viewBox="0 0 14 11"><path d="M.5.5h13v10H.5z" fill="#fff" stroke="#7b8790" /><path d="M2 2h8v7H2z" fill="#8fc4e0" /><path d="M2 5l8 1v3H2z" fill="#2e4d60" /></svg></ViewButton>
        </Views>
      </FrameStatus>
    </Frame>
  );
}

const leftRows = [
  [<Folder />, "TIG-Slicer", "2022/3/1 13:21", "文件夹", "", true],
  [<PageIcon />, "deBabelizer.rb", "2013/12/1 21:36", "RB 文件", "5 KB", true],
  [<PageIcon />, "Slicer.rb", "2014/3/20 11:15", "RB 文件", "2 KB", true],
  [<Gem />, "SU模型助手-v2.1.0.rbz", "2021/8/23 22:57", "SketchUp Pro 20...", "17,000 KB"],
  [<Exe />, "速画家助手.exe", "2022/2/28 13:25", "应用程序", "456 KB"],
];
const rightRows = [
  [<Folder />, "Administrator", "2022/3/1 15:09", "文件夹", "", true],
  [<Folder pale />, "Default", "2021/12/12 16:55", "文件夹", ""],
  [<Folder />, "公用", "", "", ""],
];

const Logo = ({ children }) => <svg width="26" height="26" viewBox="0 0 26 26">{children}</svg>;
const apps = [
  ["计算器", "open", <Logo><rect x="4" y="1" width="18" height="24" rx="1" fill="#7d97a6" /><path d="M6 3h14v4H6z" fill="#62c4ee" /><path d="M6 9h4v4H6zM11 9h4v4h-4zM16 9h4v4h-4zM6 14h4v4H6zM11 14h4v4h-4zM6 19h4v4H6zM11 19h4v4h-4z" fill="#e6edf1" /><path d="M16 14h4v9h-4z" fill="#1b5e9c" /></Logo>],
  ["Everything", "", <Logo><circle cx="15" cy="9" r="6.500" fill="none" stroke="#ff7d0a" strokeWidth="3.400" /><path d="M11 14L3 24" stroke="#ff7d0a" strokeWidth="4.500" /></Logo>],
  ["Chrome", "open", <Logo><circle cx="13" cy="13" r="11.500" fill="#fbc116" /><path d="M13 13L3 7a11.500 11.500 0 0 1 20 0z" fill="#e33b2e" /><path d="M13 13l-1 11.500A11.500 11.500 0 0 1 3 7z" fill="#2da94f" /><circle cx="13" cy="13" r="5.500" fill="#fff" /><circle cx="13" cy="13" r="4.200" fill="#3b7ded" /></Logo>],
  ["图标", "", <Logo><path d="M1 1h24v24H1z" fill="#5a0a7c" /><path d="M12 5l4-3q1 5-2 8M8 14q7 0 11-4M5 18q10 3 16-3M5 23q12 0 17-4" fill="none" stroke="#d9a6ea" strokeWidth="1.800" /></Logo>],
  ["Edge", "open", <Logo><circle cx="13" cy="13" r="11.500" fill="#1a78c8" /><path d="M2 11Q5 1 14 1.500q10 1 10.500 9-1 6-8 5-2-1 0-3 1-5-5-5Q5 7 2 11z" fill="#3fc8a2" /><path d="M9 12q-2 9 8 10l5-1q-4 5-11 3-9-4-2-12z" fill="#0d4f9b" /><path d="M17 15q6 0 7-4l2 6-7 3-6-3z" fill="#21363f" /></Logo>],
  ["文件资源管理器", "active", <Logo><path d="M2 3h8l2 3h12v5H2z" fill="#e8b93b" /><path d="M2 8h22v15H2z" fill="#ffdf7e" /><path d="M6 14h14v10h-4v-5h-6v5H6z" fill="#3f9bdc" /></Logo>],
  ["WPS 文字", "", <LogoTile $bg="linear-gradient(#3aa8fa,#3a84ea)" $size={16}>W</LogoTile>],
  ["WPS 演示", "", <LogoTile $bg="linear-gradient(#ff9240,#f26b30)">P</LogoTile>],
  ["WPS 表格", "", <LogoTile $bg="linear-gradient(#1fcf5a,#12a444)">S</LogoTile>],
  ["微信", "alert", <Logo><circle cx="10" cy="9" r="8" fill="#3bd06a" /><circle cx="7.500" cy="7" r="1.200" fill="#1a6b34" /><circle cx="12.500" cy="7" r="1.200" fill="#1a6b34" /><ellipse cx="18" cy="17" rx="7" ry="6.500" fill="#f2f2f2" /><circle cx="16" cy="15.500" r="1" fill="#666" /><circle cx="20" cy="15.500" r="1" fill="#666" /></Logo>],
  ["Photoshop", "open", <LogoTile $w={22} $bg="#041e36" $fg="#35a7fb" $size={12} $weight={600}>Ps</LogoTile>],
  ["CorelDRAW", "open", <Logo><circle cx="13" cy="13" r="11" fill="#111" stroke="#8dc63f" strokeWidth="1.800" /><path d="M7 5l5 0 7 9 0 6-6-2L6 9z" fill="#f4f4f4" /><path d="M9 6l9 12M7 9l8 9" stroke="#333" /></Logo>],
  ["图标库", "open", <LogoTile $round $cjk $bg="#6a2180" $size={7}>模据云</LogoTile>],
  ["WPS", "open", <LogoTile $bg="linear-gradient(#3aa8fa,#3a84ea)" $size={16}>W</LogoTile>],
  ["SketchUp", "open", <Logo><path d="M3 4l10-3 10 4-2 14-9 6-7-5z" fill="#e01f26" /><path d="M7 7l7-2 6 3M7 11l6-1 5 3-1 4M9 16l4 2v5" fill="none" stroke="#fff" strokeWidth="2" /></Logo>],
  ["Premiere", "open", <LogoTile $w={22} $bg="#07005c" $fg="#a9a4ff" $size={12} $weight={600}>Pr</LogoTile>],
  ["SketchUp Pro", "open", <Logo><path d="M1 1h24v24H1z" fill="#f2f6f9" /><path d="M4 8l8-5 9 4v11l-8 6-8-5" fill="none" stroke="#0b6aa3" strokeWidth="2.600" /><path d="M5 9l8 4v10M8 8l5-2 5 2v9l-4 3M5 13l5 2v5" fill="none" stroke="#0b6aa3" strokeWidth="2.200" /></Logo>],
];

export default function App() {
  return (
    <Desktop>
      <Global />
      <TitleText>Up Pro 2018</TitleText>
      <MenuBar>
        {["视图(V)", "相机(C)", "绘图(R)", "工具(T)", "窗口(W)", "扩展程序 (x)", "帮助(H)"].map((m) => <button key={m}>{m}</button>)}
      </MenuBar>
      <ToolBar>
        {toolGroups.map((g, gi) => (
          <ToolGroup key={gi} $gap={g.gap}>
            <Grip />
            {g.items.map((it, i) =>
              it === "|" ? <ToolSep key={i} /> : (
                <ToolButton key={i} aria-label="工具">
                  {it === "frame" ? (
                    <svg width="24" height="24" viewBox="0 0 24 24"><path d="M0 0h24v24H0z" fill="#0c0c0c" /><path d="M4 4h16v16H4zM4 9h16M4 14h16M9 4v16" fill="none" stroke="#fff" strokeWidth="2" /></svg>
                  ) : typeof it === "string" ? <CharTile>{it}</CharTile> : it}
                </ToolButton>
              )
            )}
          </ToolGroup>
        ))}
      </ToolBar>
      <Workspace>
        <Canvas>
          <AxisLines>
            <path d="M842.500 0v80" stroke="#0b1f8a" strokeWidth="1.500" />
            <path d="M838.500 1080L837.500 1290" stroke="#0c2d66" strokeDasharray="1.500 4" strokeWidth="1.200" />
            <path d="M855 1090L872 1288" stroke="#2a8a86" strokeWidth="1" opacity=".3" />
            <path d="M1040 946L1170 944.500" stroke="#64283c" strokeWidth="1.500" />
          </AxisLines>
        </Canvas>
        <Tray>
          <TrayTitle>默认面板</TrayTitle>
          <TrayHead><svg width="8" height="8" viewBox="0 0 8 8"><path d="M0 0h8L4 7z" fill="#111" /></svg>图元信息</TrayHead>
          <TrayBody><TrayNote>没有选择内容</TrayNote><TrayRule /></TrayBody>
          <TrayStack>
            {Array.from({ length: 8 }, (_, i) => <TrayHead key={i} $slim aria-label="展开面板" />)}
          </TrayStack>
        </Tray>
      </Workspace>
      <AppStatus>
        <StatusHint>择对象。切换到扩充选择。拖动鼠标选择多项。</StatusHint>
        <ValueTick />
        <ValueLabel>数值<ValueInput type="text" /></ValueLabel>
      </AppStatus>
      <TaskBar>
        <TaskSearch type="text" placeholder="在这里输入你要搜索的内容" aria-label="任务栏搜索" />
        <SysButton aria-label="Cortana"><svg width="16" height="16" viewBox="0 0 16 16"><circle cx="8" cy="8" r="6.800" fill="none" stroke="#f4f4f4" strokeWidth="1.900" /></svg></SysButton>
        <SysButton aria-label="任务视图"><svg width="18" height="16" viewBox="0 0 18 16" fill="none" stroke="#f0f0f0" strokeWidth="1.300"><path d="M2 4.500h10v7H2zM2 0v2h10V0M2 16v-2h10v2M15.500 0v5M15.500 9v7M14 7h3" /></svg></SysButton>
        <AppList>
          {apps.map(([label, state, art]) => <TaskButton key={label} $state={state} aria-label={label}>{art}</TaskButton>)}
        </AppList>
        <DeskSearch>
          <svg width="16" height="17" viewBox="0 0 16 17"><path d="M.5.5h15v16H.5z" fill="#cfdcf2" stroke="#3468c0" /><path d="M8 8q4 3 3 6H5q-1-3 3-6z" fill="#2456b5" /><circle cx="4" cy="7" r="1.400" fill="#2456b5" /><circle cx="6.500" cy="4.500" r="1.400" fill="#2456b5" /><circle cx="10" cy="4.500" r="1.400" fill="#2456b5" /><circle cx="12.300" cy="7.500" r="1.400" fill="#2456b5" /></svg>
          <DeskInput type="text" placeholder="搜索一下" />
          <Magnifier c="#1d232b" flip />
        </DeskSearch>
        <Weather>
          <svg width="22" height="22" viewBox="0 0 22 22"><circle cx="12" cy="8" r="8" fill="#fdb813" /><path d="M5 21a5 5 0 0 1 0-9q3-4 7-1 3 0 4 3 4 0 4 3.500T16 21z" fill="#dfeaf5" /></svg>
          29°C 局部晴朗
        </Weather>
        <TrayIcons>
          <TrayButton aria-label="显示隐藏的图标"><Chevron s={13} w={1} dir="M1 6l3.500-3.500L8 6" /></TrayButton>
          <TrayButton aria-label="麦克风"><svg width="12" height="17" viewBox="0 0 12 17"><rect x="2" width="8" height="12" rx="3" fill="currentColor" /><path d="M6 12v4M3 16h6" stroke="currentColor" strokeWidth="1.400" /></svg></TrayButton>
          <TrayButton aria-label="网络"><svg width="17" height="15" viewBox="0 0 17 15" fill="none" stroke="currentColor" strokeWidth="1.200"><path d="M4 2h12v8H6M9 10v4M5 14h8M1 1h4v5H1zM3 6v8" /></svg></TrayButton>
          <TrayButton $w={26} aria-label="音量"><svg width="16" height="14" viewBox="0 0 16 14" fill="none" stroke="currentColor" strokeWidth="1.200"><path d="M1 5h2l4-4v12L3 9H1zM9 4.500q2 2.500 0 5M11 3q3 4 0 8M13 1q4 6 0 12" /></svg></TrayButton>
          <TrayButton $w={28} aria-label="手写"><svg width="16" height="16" viewBox="0 0 16 16" fill="none" stroke="currentColor" strokeWidth="1.300"><path d="M2 13L10 3q4-3 4 1L6 12l-4 1zM4 14q4 2 5-1 0-4 4-4l2 1" /></svg></TrayButton>
          <TrayButton $w={28}>中</TrayButton>
          <TrayButton $w={31} aria-label="输入法"><FlyBadge $s={18} $c="#fff" $f={6}>iFLY</FlyBadge></TrayButton>
        </TrayIcons>
      </TaskBar>

      <Dialog>
        <DialogRow $h={30} $bg="#fff" $line="#f7f7f9" />
        <DialogRow $h={50} $bg="#f7f7f9" />
        <DialogRow $h={36} $bg="#f7f7f9" $line="#bdbdc1" />
        <DialogRow $h={59} /><DialogRow $h={60} /><DialogRow $h={60} /><DialogRow $h={60} />
        <DialogRow $h={74} $pad={9}><DialogText>ou.com)</DialogText></DialogRow>
        <DialogRow $h={60} />
        <DialogRow $h={41}><DialogText $cut>n.net)</DialogText></DialogRow>
      </Dialog>

      <Explorer
        box={[-56, 150, 1109, 1020]} name="教程"
        crumbs={["此电脑", "设计资料 (D:)", "03.sketchup资料", "04.插件", "教程"]}
        hint="" rows={leftRows} mark="grey" counts={["5 个项目", "已选择 3 个项目"]}
      />
      <Explorer
        box={[1159, 202, 1110, 1032]} active name="用户"
        crumbs={["此电脑", "本地磁盘 (C:)", "用户"]} trail
        hint={'搜索"用户"'} rows={rightRows} mark="blue" counts={["3 个项目", "选中 1 个项目"]}
      />
      <Tip role="tooltip">
        <div>创建日期: 2021/12/12 16:55</div>
        <div>大小: 23.2 GB</div>
        <div>文件夹: .android, .config, 3D 对象, Adobe Premiere Pro 2022 SP, ...</div>
        <div>文件: 1.安装步骤 .jpg, 2.快速获取.jpg, 3.魔鬼训练营.jpg, 4.软件大全.jpg,</div>
        <div>...</div>
      </Tip>
      <Pointer width="14" height="21" viewBox="0 0 14 21"><path d="M1 1v15l3.500-3 2.500 6 2.500-1-2.500-6h5z" fill="#fff" stroke="#111" /></Pointer>
      <FloatBall aria-label="语音输入"><FlyBadge $s={24} $c="#4a72c8" $f={8}>iFLY</FlyBadge></FloatBall>
    </Desktop>
  );
}
